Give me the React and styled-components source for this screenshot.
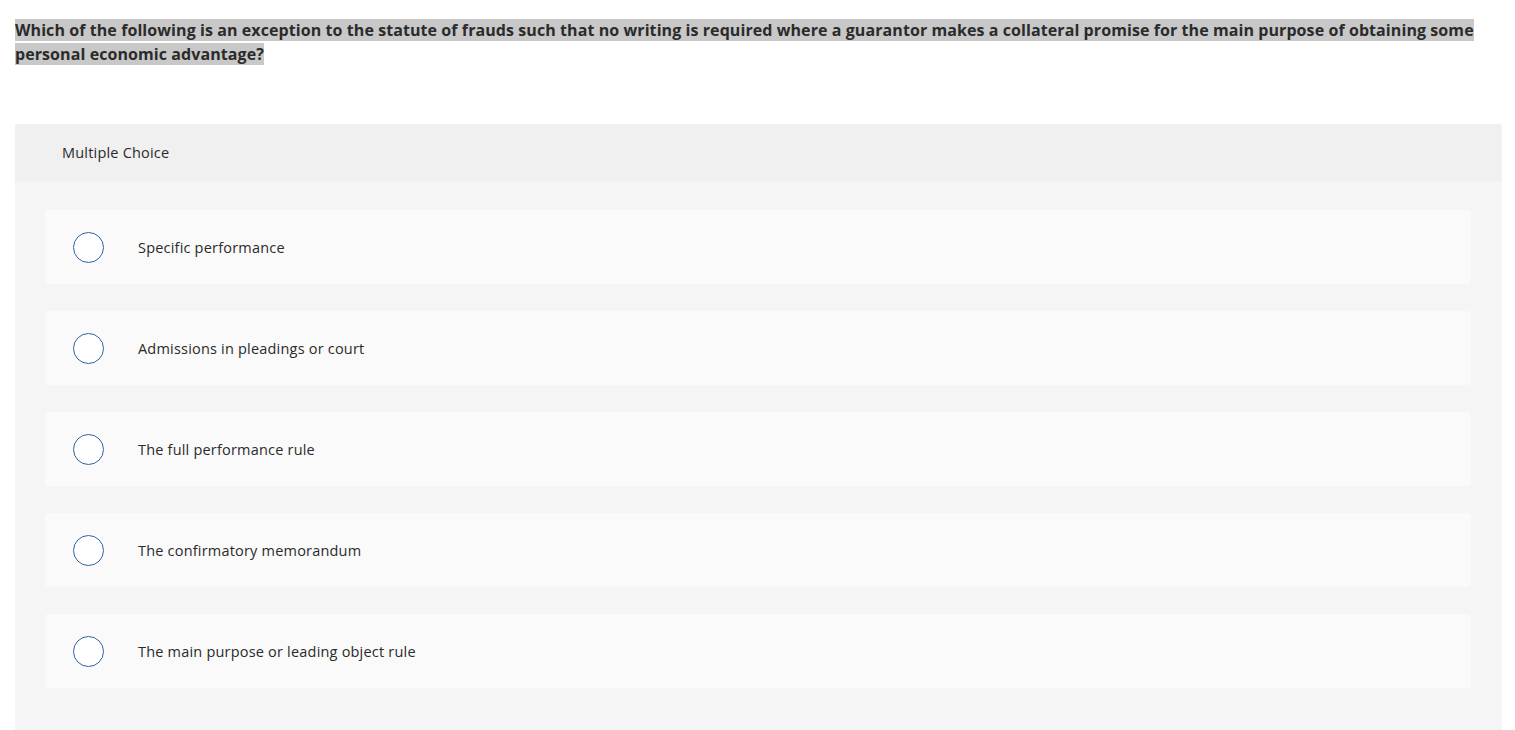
import React from "react";
import styled, { createGlobalStyle } from "styled-components";

const GlobalStyle = createGlobalStyle`
  html, body { margin: 0; padding: 0; background: #ffffff; }
  body { font-family: "Open Sans", Lato, Arial, sans-serif; color: #333; }
`;

const Page = styled.div`
  padding: 19px 13px 0 15px;
`;

const Question = styled.p`
  margin: 0;
  font-size: 16px;
  font-weight: 700;
  line-height: 23.5px;
  letter-spacing: 0.08px;
  color: #2b2b2b;
`;

const Highlight = styled.span`
  background: #c8c8c8;
`;

const Panel = styled.section`
  margin-top: 58px;
  background: #f5f5f5;
  border-radius: 3px 3px 0 0;
  padding-bottom: 44px;
`;

const PanelHeader = styled.div`
  height: 57px;
  background: #f0f0f0;
  border-radius: 3px 3px 0 0;
  display: flex;
  align-items: center;
  padding-left: 47px;
  font-size: 14.5px;
  letter-spacing: 0.2px;
  color: #2a2a2a;
`;

const Options = styled.div`
  display: flex;
  flex-direction: column;
  gap: 27px;
  padding: 29px 31px 0 30px;
`;

const Option = styled.label`
  display: flex;
  align-items: center;
  height: 74px;
  background: #fafafa;
  border-radius: 4px;
  padding-left: 27.5px;
  cursor: pointer;
`;

const Radio = styled.span`
  width: 29px;
  height: 29px;
  flex: none;
  border: 1.5px solid #30649c;
  border-radius: 50%;
  background: #fff;
  margin-right: 34.5px;
`;

const OptionText = styled.span`
  font-size: 14.5px;
  letter-spacing: 0.2px;
  color: #2a2a2a;
`;

const choices = [
  "Specific performance",
  "Admissions in pleadings or court",
  "The full performance rule",
  "The confirmatory memorandum",
  "The main purpose or leading object rule",
];

export default function App() {
  return (
    <>
      <GlobalStyle />
      <Page>
        <Question>
          <Highlight>
            Which of the following is an exception to the statute of frauds such that no writing is required where a guarantor makes a collateral promise for the main purpose of obtaining some personal economic advantage?
          </Highlight>
        </Question>
        <Panel>
          <PanelHeader>Multiple Choice</PanelHeader>
          <Options>
            {choices.map((c) => (
              <Option key={c}>
                <Radio />
                <OptionText>{c}</OptionText>
              </Option>
            ))}
          </Options>
        </Panel>
      </Page>
    </>
  );
}
